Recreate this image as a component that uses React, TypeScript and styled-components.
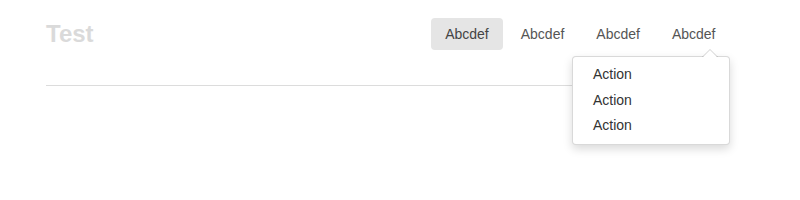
import React from "react";
import styled, { createGlobalStyle } from "styled-components";

const Global = createGlobalStyle`
  html, body { margin: 0; padding: 0; background: #fff; }
  body { font-family: "Liberation Sans", Arial, Helvetica, sans-serif; }
`;

const Page = styled.div`
  width: 800px;
  height: 200px;
  padding-left: 46px;
  box-sizing: border-box;
`;

const Header = styled.header`
  width: 684px;
  padding-top: 18px;
  padding-bottom: 35px;
  border-bottom: 1px solid #dcdcdc;
  display: flex;
  align-items: flex-start;
  justify-content: space-between;
`;

const Title = styled.h3`
  margin: 0;
  font-size: 24px;
  line-height: 32px;
  font-weight: bold;
  color: #dadada;
`;

const Nav = styled.ul`
  list-style: none;
  margin: 0;
  padding: 0;
  display: flex;
  gap: 3px;
`;

const Item = styled.li`
  position: relative;
`;

const Pill = styled.a<{ $active?: boolean }>`
  display: block;
  height: 32px;
  line-height: 32px;
  padding: 0 14.5px;
  font-size: 14px;
  border-radius: 4px;
  color: ${(p) => (p.$active ? "#444" : "#555")};
  background: ${(p) => (p.$active ? "#e5e5e5" : "transparent")};
  text-decoration: none;
  cursor: pointer;
`;

const Menu = styled.ul`
  position: absolute;
  top: calc(100% + 6px);
  right: 0;
  width: 158px;
  box-sizing: border-box;
  margin: 0;
  padding: 5px 0;
  list-style: none;
  background: #fff;
  border: 1px solid rgba(0, 0, 0, 0.15);
  border-radius: 4px;
  box-shadow: 0 4px 10px rgba(0, 0, 0, 0.15);
  z-index: 2;

  &::before,
  &::after {
    content: "";
    position: absolute;
    border-style: solid;
    border-color: transparent;
  }
  &::before {
    right: 11px;
    top: -8px;
    border-width: 0 8px 8px 8px;
    border-bottom-color: rgba(0, 0, 0, 0.18);
  }
  &::after {
    right: 12px;
    top: -7px;
    border-width: 0 7px 7px 7px;
    border-bottom-color: #fff;
  }
`;

const MenuItem = styled.li`
  padding: 0 20px;
  height: 25.5px;
  line-height: 25.5px;
  font-size: 14px;
  color: #333;
`;

export default function App() {
  return (
    <>
      <Global />
      <Page>
        <Header>
          <Title>Test</Title>
          <Nav>
            <Item>
              <Pill $active>Abcdef</Pill>
            </Item>
            <Item>
              <Pill>Abcdef</Pill>
            </Item>
            <Item>
              <Pill>Abcdef</Pill>
            </Item>
            <Item>
              <Pill>Abcdef</Pill>
              <Menu>
                <MenuItem>Action</MenuItem>
                <MenuItem>Action</MenuItem>
                <MenuItem>Action</MenuItem>
              </Menu>
            </Item>
          </Nav>
        </Header>
      </Page>
    </>
  );
}
